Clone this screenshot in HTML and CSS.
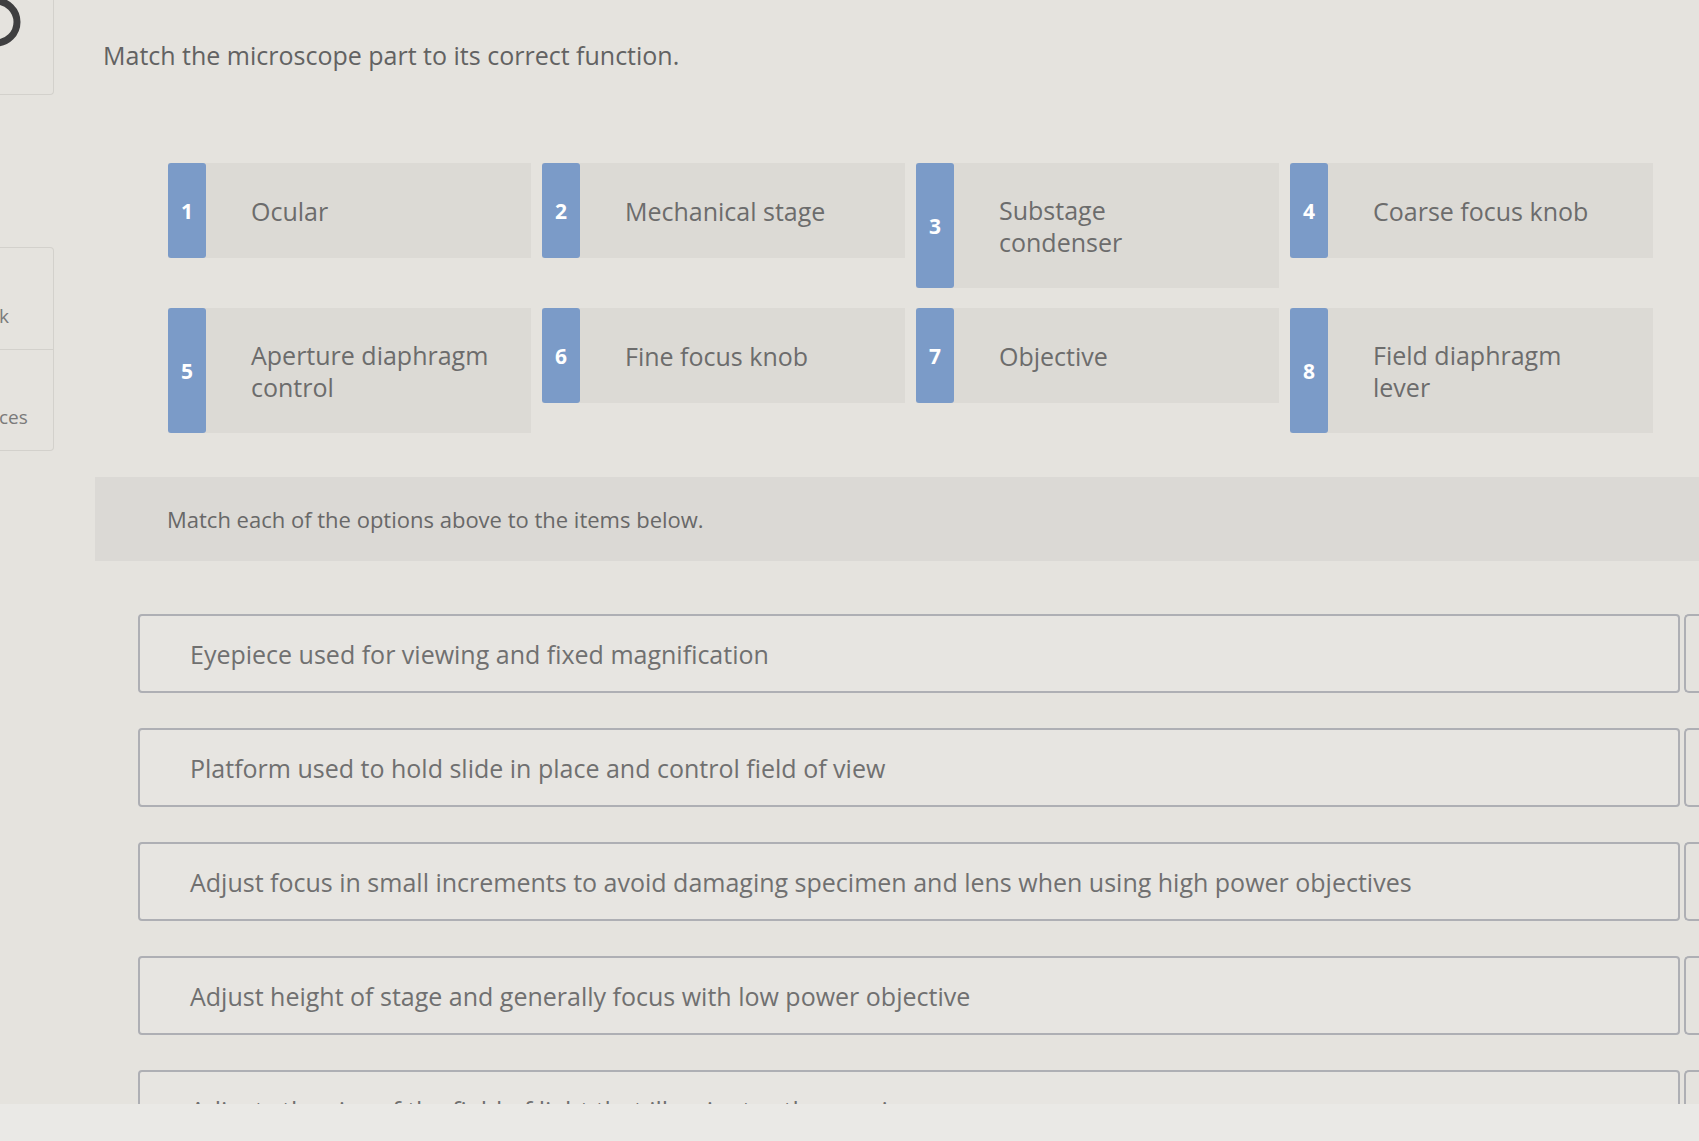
FILE: index.html
```html
<!DOCTYPE html>
<html lang="en">
<head>
<meta charset="utf-8">
<title>Match the microscope part</title>
<link rel="stylesheet" href="styles.css">
</head>
<body>
<div class="screen">
  <aside class="sidebar">
    <div class="side-top">
      <svg class="ring" width="30" height="56" viewBox="0 0 30 56"><circle cx="2" cy="26" r="21" fill="none" stroke="#3f3f40" stroke-width="7"/></svg>
    </div>
    <div class="side-group">
      <div class="side-cell"><span class="side-text">k</span></div>
      <div class="side-cell"><span class="side-text">ces</span></div>
    </div>
  </aside>
  <main class="main">
    <h1 class="title">Match the microscope part to its correct function.</h1>
    <div class="options">
      <div class="opt"><div class="badge">1</div><div class="opt-text">Ocular</div></div>
      <div class="opt"><div class="badge">2</div><div class="opt-text">Mechanical stage</div></div>
      <div class="opt tall"><div class="badge">3</div><div class="opt-text">Substage<br>condenser</div></div>
      <div class="opt"><div class="badge">4</div><div class="opt-text">Coarse focus knob</div></div>
      <div class="opt tall"><div class="badge">5</div><div class="opt-text">Aperture diaphragm<br>control</div></div>
      <div class="opt"><div class="badge">6</div><div class="opt-text">Fine focus knob</div></div>
      <div class="opt"><div class="badge">7</div><div class="opt-text">Objective</div></div>
      <div class="opt tall"><div class="badge">8</div><div class="opt-text">Field diaphragm<br>lever</div></div>
    </div>
    <div class="band">Match each of the options above to the items below.</div>
    <div class="items">
      <div class="item-row"><div class="item">Eyepiece used for viewing and fixed magnification</div><div class="drop"></div></div>
      <div class="item-row"><div class="item">Platform used to hold slide in place and control field of view</div><div class="drop"></div></div>
      <div class="item-row"><div class="item">Adjust focus in small increments to avoid damaging specimen and lens when using high power objectives</div><div class="drop"></div></div>
      <div class="item-row"><div class="item">Adjust height of stage and generally focus with low power objective</div><div class="drop"></div></div>
      <div class="item-row"><div class="item">Adjusts the size of the field of light that illuminates the specimen</div><div class="drop"></div></div>
    </div>
  </main>
</div>
</body>
</html>
```
FILE: styles.css
```css
* { box-sizing: border-box; }
html, body { margin: 0; padding: 0; }
body {
  background: #eae9e6;
  font-family: "Open Sans", Lato, "Liberation Sans", sans-serif;
  color: #6c6c6c;
  width: 1699px;
  height: 1141px;
  overflow: hidden;
}
.screen {
  display: flex;
  height: 1104px;
  overflow: hidden;
  background: #e5e3de;
}
.sidebar {
  width: 54px;
  flex: 0 0 54px;
  display: flex;
  flex-direction: column;
}
.side-top {
  height: 95px;
  border-right: 1px solid #d3d1cc;
  border-bottom: 1px solid #d3d1cc;
  border-bottom-right-radius: 4px;
}
.ring { display: block; margin-left: -6px; margin-top: -4px; }
.side-group {
  margin-top: 152px;
  border: 1px solid #d3d1cc;
  border-left: none;
  border-radius: 0 4px 4px 0;
}
.side-cell {
  height: 101px;
  display: flex;
  align-items: center;
  padding-top: 34px;
  font-size: 19px;
  color: #7a7a7a;
}
.side-cell + .side-cell { border-top: 1px solid #d3d1cc; }
.side-text { margin-left: -1px; }
.main {
  flex: 1;
  min-width: 0;
  padding-top: 39px;
}
.title {
  margin: 0 0 0 49px;
  font-size: 25px;
  line-height: 32px;
  font-weight: 400;
  color: #626262;
}
.options {
  display: grid;
  grid-template-columns: repeat(4, 363px);
  column-gap: 11px;
  row-gap: 20px;
  align-items: start;
  margin: 92px 0 0 114px;
}
.opt {
  display: flex;
  height: 95px;
  background: #dcdad5;
}
.opt.tall { height: 125px; }
.badge {
  width: 38px;
  flex: 0 0 38px;
  background: #7b9bc8;
  border-radius: 3px;
  color: #fff;
  font-weight: 700;
  font-size: 21px;
  display: flex;
  align-items: center;
  justify-content: center;
}
.opt-text {
  display: flex;
  align-items: center;
  padding-left: 45px;
  font-size: 25px;
  line-height: 32px;
  color: #6c6c6c;
}
.band {
  margin: 44px 0 0 41px;
  height: 84px;
  background: #dbd9d5;
  padding-left: 72px;
  display: flex;
  align-items: center;
  font-size: 22px;
  color: #686868;
}
.items {
  margin: 53px 0 0 84px;
  display: flex;
  flex-direction: column;
  gap: 35px;
}
.item-row {
  display: flex;
  gap: 4px;
  height: 79px;
}
.item {
  width: 1542px;
  flex: 0 0 1542px;
  border: 2px solid #aeafb4;
  border-radius: 4px;
  background: #e7e5e1;
  padding-left: 50px;
  display: flex;
  align-items: center;
  font-size: 25px;
  color: #707070;
}
.drop {
  flex: 0 0 60px;
  border: 2px solid #aeafb4;
  border-right: none;
  border-radius: 5px 0 0 5px;
}
```
